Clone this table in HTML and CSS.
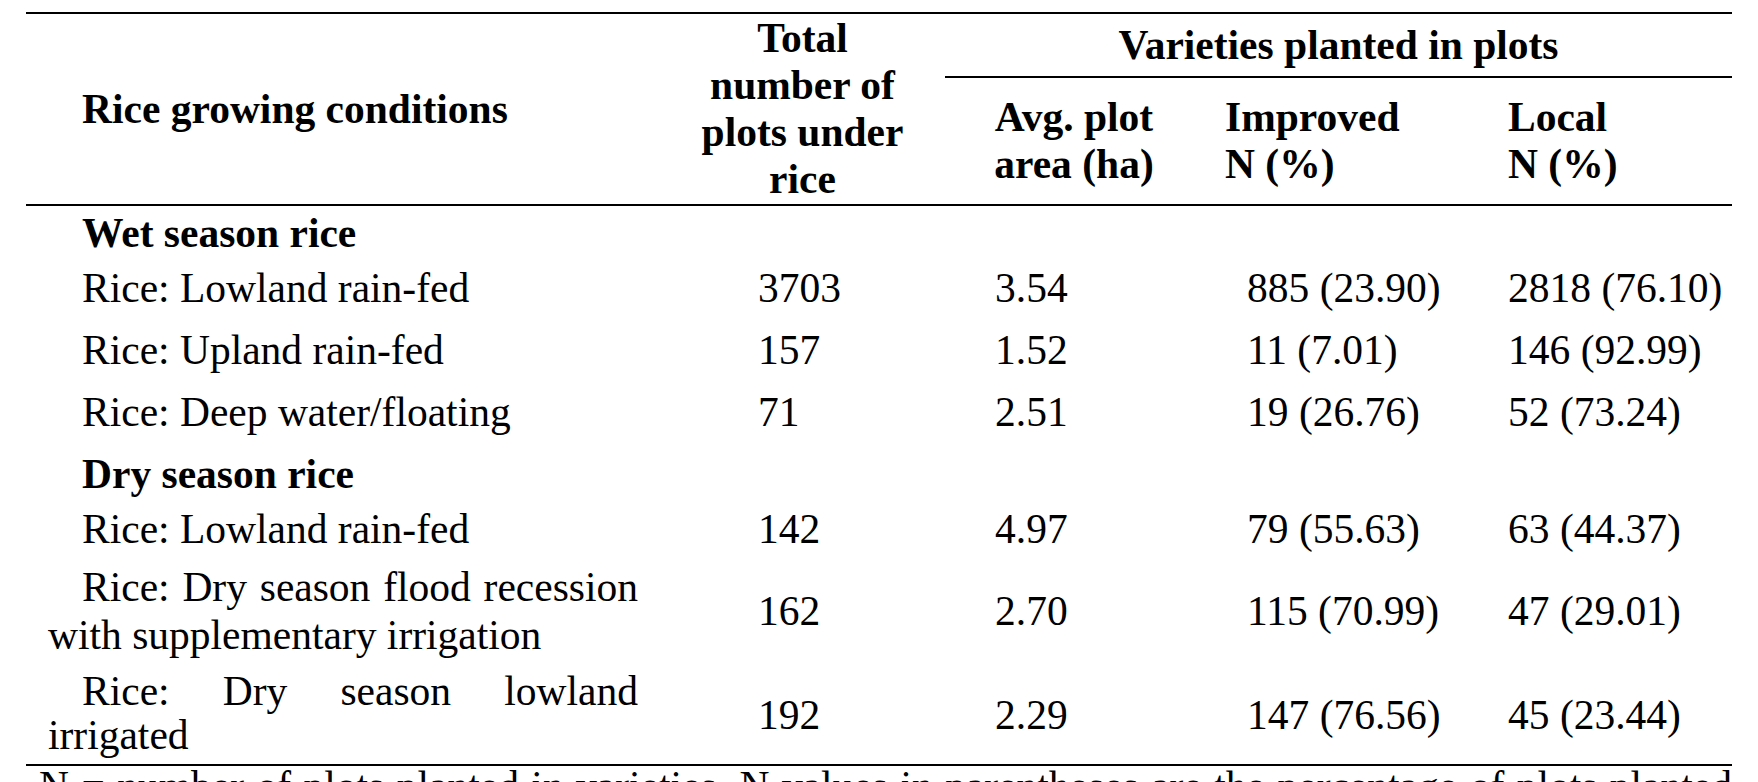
FILE: index.html
```html
<!DOCTYPE html>
<html lang="en">
<head>
<meta charset="utf-8">
<title>Rice growing conditions</title>
<link rel="stylesheet" href="styles.css">
</head>
<body>
<div class="page">
  <table class="rice">
    <colgroup>
      <col class="c1"><col class="c2"><col class="c3"><col class="c4"><col class="c5">
    </colgroup>
    <thead>
      <tr class="head-top">
        <th rowspan="2" class="cond">Rice growing conditions</th>
        <th rowspan="2" class="total">Total<br>number of<br>plots under<br>rice</th>
        <th colspan="3" class="varieties">Varieties planted in plots</th>
      </tr>
      <tr class="head-sub">
        <th class="avg">Avg. plot<br>area (ha)</th>
        <th class="sub">Improved<br>N (%)</th>
        <th class="sub">Local<br>N (%)</th>
      </tr>
    </thead>
    <tbody>
      <tr class="group tight">
        <td class="label" colspan="5">Wet season rice</td>
      </tr>
      <tr class="loose">
        <td class="label">Rice: Lowland rain-fed</td>
        <td class="num">3703</td><td class="area">3.54</td><td class="imp">885 (23.90)</td><td class="loc">2818 (76.10)</td>
      </tr>
      <tr class="loose">
        <td class="label">Rice: Upland rain-fed</td>
        <td class="num">157</td><td class="area">1.52</td><td class="imp">11 (7.01)</td><td class="loc">146 (92.99)</td>
      </tr>
      <tr class="loose">
        <td class="label">Rice: Deep water/floating</td>
        <td class="num">71</td><td class="area">2.51</td><td class="imp">19 (26.76)</td><td class="loc">52 (73.24)</td>
      </tr>
      <tr class="group tight">
        <td class="label" colspan="5">Dry season rice</td>
      </tr>
      <tr class="mid">
        <td class="label">Rice: Lowland rain-fed</td>
        <td class="num">142</td><td class="area">4.97</td><td class="imp">79 (55.63)</td><td class="loc">63 (44.37)</td>
      </tr>
      <tr class="double">
        <td class="label wrap">Rice: Dry season flood recession with supplementary irrigation</td>
        <td class="num">162</td><td class="area">2.70</td><td class="imp">115 (70.99)</td><td class="loc">47 (29.01)</td>
      </tr>
      <tr class="double last">
        <td class="label wrap">Rice: Dry season lowland irrigated</td>
        <td class="num">192</td><td class="area">2.29</td><td class="imp">147 (76.56)</td><td class="loc">45 (23.44)</td>
      </tr>
    </tbody>
  </table>
  <p class="note">N = number of plots planted in varieties. N values in parentheses are the percentage of plots planted in varieties.</p>
</div>
</body>
</html>
```

FILE: styles.css
```css
html, body {
  margin: 0;
  padding: 0;
  background: #ffffff;
}

body {
  font-family: "Liberation Serif", "Times New Roman", serif;
  color: #000000;
  font-size: 41.5px;
}

.page {
  padding: 12px 26px 0 26px;
  width: 1706px;
}

.rice {
  width: 1706px;
  table-layout: fixed;
  border-collapse: separate;
  border-spacing: 0;
}

.c1 { width: 634px; }
.c2 { width: 285px; }
.c3 { width: 258px; }
.c4 { width: 283px; }
.c5 { width: 246px; }

.rice th,
.rice td {
  padding: 0 22px;
  line-height: 47px;
  white-space: nowrap;
}

.rice th {
  font-weight: bold;
}

/* header */
.rice .head-top th {
  border-top: 2px solid #000;
}

.rice th.cond,
.rice th.total {
  border-bottom: 2px solid #000;
  vertical-align: middle;
}

.rice th.cond {
  text-align: left;
  text-indent: 34px;
}

.rice th.total {
  text-align: center;
}

.rice th.varieties {
  text-align: center;
  padding-top: 8px;
  padding-bottom: 7px;
  border-bottom: 2px solid #000;
}

.rice .head-sub th {
  padding-top: 16px;
  padding-bottom: 16px;
  border-bottom: 2px solid #000;
  vertical-align: middle;
}

.rice th.avg {
  text-align: center;
}

.rice th.sub {
  text-align: left;
}

/* body */
.rice td {
  vertical-align: middle;
  padding-top: 4px;
}

.rice td.label {
  text-align: left;
  text-indent: 34px;
  vertical-align: top;
}

.rice .group td.label {
  font-weight: bold;
}

.rice td.wrap {
  white-space: normal;
  text-align: justify;
}

.rice td.num { padding-left: 98px; }
.rice td.area { padding-left: 50px; }
.rice td.imp { padding-left: 44px; }
.rice td.loc { padding-left: 22px; padding-right: 0; }

.rice .tight td { padding-bottom: 4px; }
.rice .loose td { padding-bottom: 11px; }
.rice .mid td { padding-bottom: 6px; }
.rice .double td {
  padding-bottom: 6px;
  line-height: 48px;
}
.rice .double.last td {
  padding-bottom: 7px;
  line-height: 44px;
  border-bottom: 2px solid #000;
}
.rice .double.last td.num,
.rice .double.last td.area,
.rice .double.last td.imp,
.rice .double.last td.loc {
  padding-top: 7px;
}

.note {
  margin: 0;
  padding-left: 13px;
  line-height: 40px;
  text-align: justify;
}
```
